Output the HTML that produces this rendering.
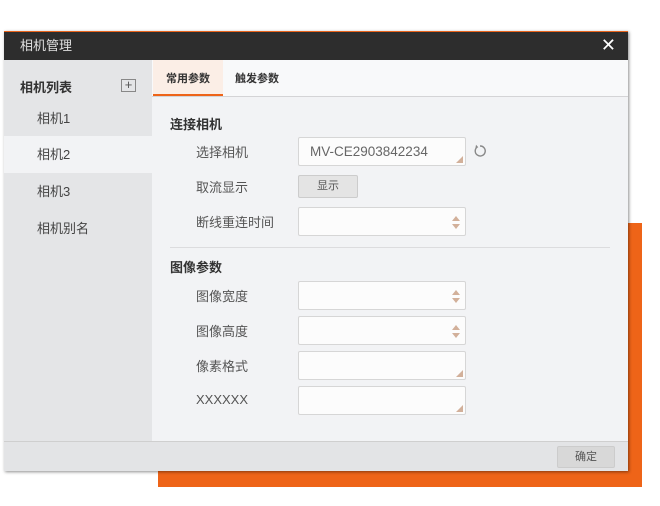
<!DOCTYPE html>
<html><head><meta charset="utf-8"><style>
*{margin:0;padding:0;box-sizing:border-box}
body{width:660px;height:506px;background:#fff;position:relative;overflow:hidden;font-family:"Liberation Sans","Noto Sans CJK SC",sans-serif;font-size:13px;color:#555}
.orange{position:absolute;left:158px;top:223px;width:484px;height:264px;background:#ee6418}
.dlg{position:absolute;left:4px;top:31px;width:624px;height:440px;background:#f2f3f5;box-shadow:1px 1px 3px rgba(0,0,0,.45)}
.title{position:absolute;left:0;top:0;width:624px;height:29px;background:#2d2d2d;border-top:1px solid #e8641c;color:#e0e0e0;font-size:13px;line-height:27px;padding-left:16px}
.close{position:absolute;right:12px;top:0;color:#fff;font-size:18px;line-height:27px}
.side{position:absolute;left:0;top:29px;width:148px;height:381px;background:#e4e5e7}
.side .h{position:absolute;left:16px;top:17px;font-weight:bold;color:#333;font-size:13px}
.plus{position:absolute;left:117px;top:19px;width:15px;height:13px;border:1px solid #888;color:#555;font-size:13px;line-height:10px;text-align:center}
.item{position:absolute;left:0;width:148px;height:37px;line-height:37px;padding-left:33px;color:#444}
.tabs{position:absolute;left:148px;top:29px;width:476px;height:37px;background:#f8f9fa;border-bottom:1px solid #d4d4d6}
.tab{position:absolute;top:0;height:36px;line-height:39px;font-size:11px;font-weight:bold;color:#333;text-align:center}
.sec{position:absolute;left:166px;font-weight:bold;color:#333;font-size:13px}
.lbl{position:absolute;left:192px;color:#555}
.inp{position:absolute;left:294px;width:168px;height:29px;background:#fcfcfc;border:1px solid #d6d6d6;border-radius:2px;color:#666;font-size:13.5px;line-height:27px;padding-left:11px}
.spin:before{content:"";position:absolute;right:5px;top:8px;border:4px solid transparent;border-bottom:5px solid #d2b09a;border-top:0}
.spin:after{content:"";position:absolute;right:5px;top:16px;border:4px solid transparent;border-top:5px solid #d2b09a;border-bottom:0}
.cor:after{content:"";position:absolute;right:2px;bottom:2px;border-left:7px solid transparent;border-bottom:7px solid #d2b09a}
.btn{position:absolute;background:#e4e4e4;border:1px solid #ccc;border-radius:2px;text-align:center;font-size:11px;color:#555}
.foot{position:absolute;left:0;top:410px;width:624px;height:30px;background:#e3e4e6;border-top:1px solid #cfcfcf}
</style></head><body>
<div class="orange"></div>
<div class="dlg">
 <div class="title">相机管理<span class="close">✕</span></div>
 <div class="side">
  <div class="h">相机列表</div><div class="plus">+</div>
  <div class="item" style="top:40px">相机1</div>
  <div class="item" style="top:76px;background:#f2f3f5">相机2</div>
  <div class="item" style="top:113px">相机3</div>
  <div class="item" style="top:150px">相机别名</div>
 </div>
 <div class="tabs">
  <div class="tab" style="left:1px;width:70px;background:#fbeee6;border-bottom:2px solid #ee6418">常用参数</div>
  <div class="tab" style="left:72px;width:66px">触发参数</div>
 </div>
 <div class="sec" style="top:83px">连接相机</div>
 <div class="lbl" style="top:111px">选择相机</div>
 <div class="inp cor" style="top:106px">MV-CE2903842234</div>
 <svg style="position:absolute;left:469px;top:113px" width="14" height="14" viewBox="0 0 14 14"><path d="M4.5 2.8A5 5 0 1 0 7 2" fill="none" stroke="#888" stroke-width="1.4"/><path d="M3 0.8L5.3 3.2 2.4 4.3z" fill="#888"/></svg>
 <div class="lbl" style="top:146px">取流显示</div>
 <div class="btn" style="left:294px;top:144px;width:60px;height:23px;line-height:21px">显示</div>
 <div class="lbl" style="top:181px">断线重连时间</div>
 <div class="inp spin" style="top:176px"></div>
 <div style="position:absolute;left:166px;top:216px;width:440px;height:1px;background:#dcdcde"></div>
 <div class="sec" style="top:226px">图像参数</div>
 <div class="lbl" style="top:255px">图像宽度</div>
 <div class="inp spin" style="top:250px"></div>
 <div class="lbl" style="top:290px">图像高度</div>
 <div class="inp spin" style="top:285px"></div>
 <div class="lbl" style="top:325px">像素格式</div>
 <div class="inp cor" style="top:320px"></div>
 <div class="lbl" style="top:361px">XXXXXX</div>
 <div class="inp cor" style="top:355px"></div>
 <div class="foot"><div class="btn" style="left:553px;top:4px;width:58px;height:22px;line-height:20px;background:#d8d8d8">确定</div></div>
</div>
</body></html>
